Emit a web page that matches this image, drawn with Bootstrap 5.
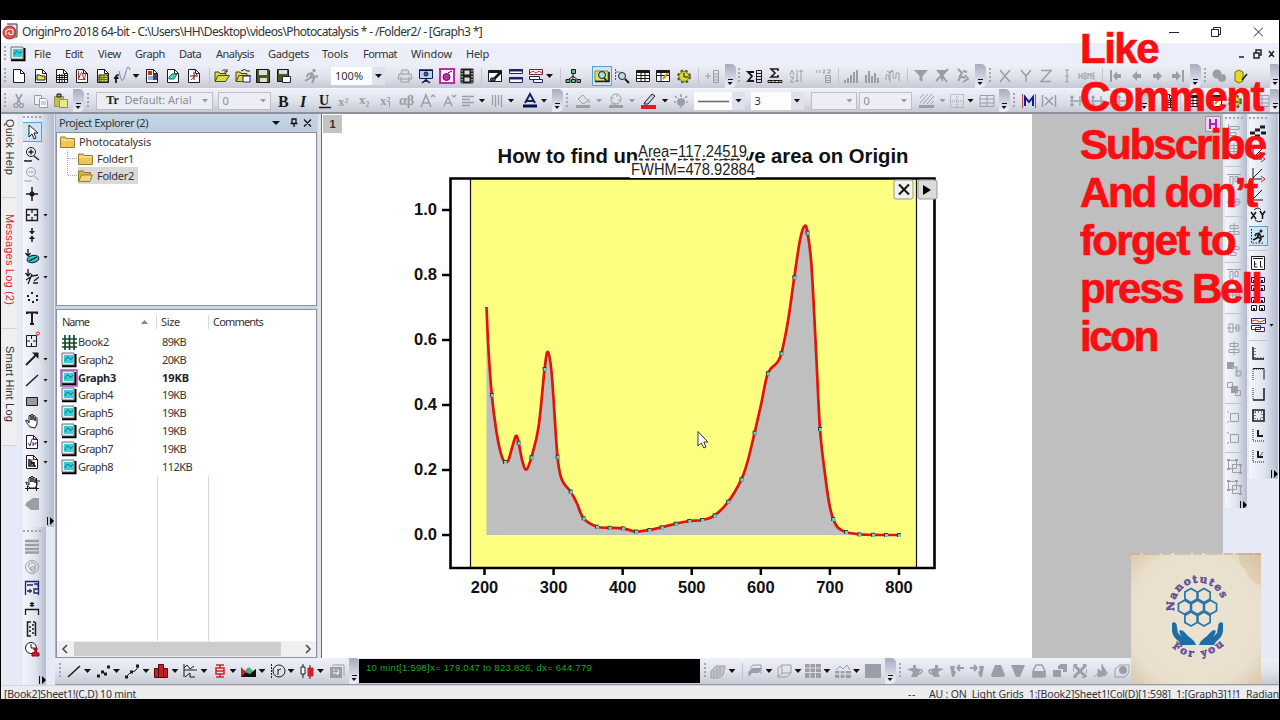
<!DOCTYPE html>
<html lang="en">
<head>
<meta charset="utf-8">
<title>OriginPro 2018 64-bit</title>
<meta name="viewport" content="width=device-width, initial-scale=1">
<link href="https://cdn.jsdelivr.net/npm/bootstrap@5.3.0/dist/css/bootstrap.min.css" rel="stylesheet">
<style>
body{background:#000;font-family:"Noto Sans","Open Sans",sans-serif;font-size:11px;line-height:14px;color:#333;overflow:hidden}
.screen{width:1280px;height:720px;padding:20px 1px 21px;overflow:hidden}
.win{height:679px;background:#e6eaf6;overflow:hidden}
.titlebar{height:23px;background:#fff;padding-left:1px}
.titlebar .ttl{font-size:12px;color:#333;white-space:nowrap}
.menubar{height:21px;background:#eceffa;white-space:nowrap}
.menubar span{color:#333;font-size:11px}
.fitw{display:inline-block;white-space:pre}
.tbar{background:linear-gradient(#edf0f8,#e0e3ec 50%,#c7cad5);overflow:hidden}
.tbar.vert{background:linear-gradient(90deg,#f4f6fc,#dfe3ee 55%,#b4bbcc)}
.tbar1,.tbar2{height:24px}
.tbar2{border-top:1px solid #f4f6fb}
.rule2{height:2px;background:#8e919c}
.ic{width:18px;height:18px;flex:none;position:relative;color:#1b1b1b}
.ic>svg{width:16px;height:16px;display:block;margin:1px;overflow:visible}
.ic.dim{color:#9b9ea5}
.ic.hot{background:#cfe4f5;box-shadow:0 0 0 1px #5aa0cf}
.dd{width:7px;height:4px;flex:none;background:#111;clip-path:polygon(0 0,100% 0,50% 100%)}
.dd.dim{background:#9a9ca4}
.grip{width:4px;height:16px;flex:none;background:repeating-linear-gradient(#a3a6b1 0 2px,transparent 2px 4px) center/2px 100% no-repeat}
.sepv{width:1px;height:16px;flex:none;background:#c2c5d0}
.over{width:11px;flex:none;align-self:stretch;background:linear-gradient(#a9acbf,#e8ebf5 90%);border-radius:0 5px 5px 0;padding-bottom:3px}
.over i{width:5px;height:1px;background:#111;margin-bottom:2px}
.vert .grip{width:20px;height:4px;background:repeating-linear-gradient(90deg,#a3a6b1 0 2px,transparent 2px 4px) center/100% 2px no-repeat}
.vert .sepv{width:18px;height:1px}
.vert .rowc{flex:none;height:18px}
.cmb{flex:none;height:18px;background:#fdfdfe;font-size:11px;padding-left:4px;color:#333}
.cmb.off{background:#eceef4;border:1px solid #bcbfc8;color:#8a8d94}
.cmb .btnx{width:13px;align-self:stretch;background:#dfe2ec}
.cmb.off .btnx{background:none}
.tabs{width:17px}
.tab-v{writing-mode:vertical-rl;background:#efeff1;width:16px;font:11px/15px "Liberation Sans",Arial,sans-serif;color:#333;border-bottom:1px solid #dcd0d8}
.lefttools{width:37px;padding-left:5px}
.px-panel{width:263px;background:#c9d6e4;border-left:1px solid #a9b1bf;padding:0 1px 0 0}
.px-head{height:18px;background:linear-gradient(#c5d7e6,#bccddd);padding-left:3px}
.pane{background:#fff;border:1px solid #8c919b}
.treebox{height:174px;padding:0 3px}
.treebox .rowt{height:17px}
.filebox{height:349px;margin-top:3px}
.rowf{height:17.85px}
.vline{border-left:1px solid #cfdbe6}
.sbar{height:16px;background:#f0f0f0}
.sbar .thumb{width:207px;height:14px;background:#cdcdcd}
.divider{width:4px;background:#e3e4ea;border-right:1px solid #6b6e78}
.sheetno{width:19px;height:18px;background:#c3c3c3;font:bold 11px/18px "Liberation Sans",Arial,sans-serif;color:#333}
.work{width:901px;background:#bfbfbf}
.bottombar{height:27px;border-bottom:1px solid #9598a3}
.readout{width:341px;height:24px;background:#000;color:#1ea42a;font:9.5px/17px "Liberation Sans",Arial,sans-serif;padding-left:7px}
.stat{height:14px;background:#ececee;border-top:1px solid #d5d6dc;overflow:hidden;white-space:nowrap;font-size:10.5px;line-height:17px}
.shout{left:1080px;top:25px;font:bold 42px/48px "Liberation Sans",Arial,sans-serif;color:#fb0d11;-webkit-text-stroke:.7px #fb0d11;z-index:5}
.shout div{white-space:nowrap}
.logo{left:1131px;top:553px;width:130px;height:131px;z-index:6}
.chart{width:710px;height:544px;background:#fff}
</style>
</head>
<body>
<div class="screen position-relative">
<div class="win d-flex flex-column">
  <div class="titlebar d-flex align-items-center">
    <svg width="16" height="17" viewBox="0 0 16 17" class="me-1"><path d="M5 1h10v13h-4" fill="#dce4ee" stroke="#334"/><circle cx="7.5" cy="9.5" r="6.5" fill="#d95350" stroke="#a33033"/><path d="M4 12V7.500l3.500-1.500L11 7v4.500H7V9" fill="none" stroke="#fff" stroke-width="1"/></svg>
    <span class="ttl fitw" data-fit="460">OriginPro 2018 64-bit - C:\Users\HH\Desktop\videos\Photocatalysis * - /Folder2/ - [Graph3 *]</span>
    <svg class="ms-auto me-3" width="94" height="14" viewBox="0 0 94 14" fill="none" stroke="#222"><path d="M0 7.500h10M42.500 4.500h7v7h-7zM44.500 4.500v-2h7v7h-2M85 2.500l9 9M94 2.500l-9 9"/></svg>
  </div>
  <div class="menubar d-flex align-items-center" id="menu"></div>
  <div class="tbar tbar1 d-flex align-items-center" id="t1"></div>
  <div class="tbar tbar2 d-flex align-items-center" id="t2"></div>
  <div class="rule2"></div>

  <div class="d-flex flex-grow-1" style="min-height:0">
    <div class="tabs d-flex flex-column">
      <div class="tab-v" style="height:84px;padding-top:5px"><span class="fitw" data-fitv="56">Quick Help</span></div>
      <div class="tab-v" style="height:131px;padding-top:16px;color:#d9282c"><span class="fitw" data-fitv="91">Messages Log (2)</span></div>
      <div class="tab-v" style="height:117px;padding-top:17px"><span class="fitw" data-fitv="76">Smart Hint Log</span></div>
    </div>
    <div class="lefttools d-flex flex-column">
      <div class="tbar vert d-flex flex-column" id="l1" style="width:31px;height:413px"></div>
      <div class="tbar vert d-flex flex-column" id="l2" style="width:23px;height:158px"></div>
    </div>
    <div class="d-flex flex-column flex-grow-1">
      <div class="d-flex" style="height:544px">
        <div class="px-panel">
          <div class="px-head d-flex align-items-center">
            <span class="fitw" data-fit="89">Project Explorer (2)</span>
            <svg class="ms-auto me-1" width="42" height="12" viewBox="0 0 42 12" fill="none" stroke="#111" stroke-width="1.300"><path d="M1 4h8l-4 4z" fill="#111" stroke="none"/><path d="M19.500 6.500h7M21 6V2h4v4M23 6v4M33 2.500l7 7M40 2.500l-7 7"/></svg>
          </div>
          <div class="pane treebox">
            <div class="rowt d-flex align-items-center"><svg class="me-1 flex-shrink-0" width="15" height="12" viewBox="0 0 15 12"><path d="M.5 2.500V1h5l1 1.500h8v9H.5z" fill="#edc65a" stroke="#9a7a2c"/><path d="M1.500 4h12" stroke="#fff0b0"/></svg><span class="fitw" data-fit="72">Photocatalysis</span></div>
            <div class="d-flex"><svg width="18" height="34" viewBox="0 0 18 34" class="flex-shrink-0" fill="none" stroke="#a4a8b0" stroke-dasharray="1 1"><path d="M7.500 0v25M8 8.500h10M8 25.500h10"/></svg>
              <div>
                <div class="rowt d-flex align-items-center"><svg class="me-1" width="15" height="12" viewBox="0 0 15 12"><path d="M.5 2.500V1h5l1 1.500h8v9H.5z" fill="#edc65a" stroke="#9a7a2c"/><path d="M1.500 4h12" stroke="#fff0b0"/></svg><span class="fitw" data-fit="37">Folder1</span></div>
                <div class="rowt d-flex align-items-center pe-1" style="background:#d9d9d9"><svg class="me-1" width="15" height="12" viewBox="0 0 15 12"><path d="M.5 11.500V1h5l1 1.500h6V5" fill="#d9ae45" stroke="#9a7a2c"/><path d="M.5 11.500L3.500 5h11L12 11.500z" fill="#f4d67a" stroke="#9a7a2c"/></svg><span class="fitw" data-fit="37">Folder2</span></div>
              </div>
            </div>
          </div>
          <div class="pane filebox d-flex flex-column">
            <div class="d-flex align-items-center" style="height:23px">
              <span style="width:84px;padding-left:5px"><span class="fitw" data-fit="27">Name</span></span>
              <span class="dd" style="background:#888;transform:rotate(180deg);margin-right:8px"></span>
              <span class="vline ps-1" style="width:52px"><span class="fitw" data-fit="19">Size</span></span>
              <span class="vline ps-1"><span class="fitw" data-fit="50">Comments</span></span>
            </div>
            <div id="files"></div>
            <div class="d-flex flex-grow-1"><div style="width:100px"></div><div class="vline" style="width:51px"></div><div class="vline"></div></div>
            <div class="sbar d-flex align-items-center justify-content-between px-1"><svg width="8" height="10" fill="none" stroke="#444" stroke-width="1.500"><path d="M6 1L2 5l4 4"/></svg><div class="thumb" style="margin-right:18px"></div><svg width="8" height="10" fill="none" stroke="#444" stroke-width="1.500"><path d="M2 1l4 4-4 4"/></svg></div>
          </div>
        </div>
        <div class="divider"></div>
        <div class="work d-flex position-relative">
          <svg class="chart" viewBox="322 114 710 544" id="chart"></svg>
          <div class="sheetno position-absolute text-center" style="left:1px;top:1px">1</div>
          <svg class="position-absolute" style="left:883px;top:2px" width="16" height="16"><path d="M.5.5h15v15H.5z" fill="#e9d6ee" stroke="#999"/><path d="M5 3v10M11 3v10M5 8h6" stroke="#b51cc0" stroke-width="2"/></svg>
        </div>
        <div class="tbar vert d-flex flex-column" id="r1" style="width:22px;height:394px;margin-left:2px"></div>
        <div class="tbar vert d-flex flex-column" id="r2" style="width:29px;height:365px;margin-left:2px"></div>
      </div>
      <div class="tbar bottombar d-flex align-items-center" id="b1"></div>
    </div>
  </div>
  <div class="stat d-flex" id="status"></div>
</div>

<div class="shout position-absolute">
  <div><span class="fitw" data-fit="78">Like</span></div><div><span class="fitw" data-fit="183">Comment</span></div><div><span class="fitw" data-fit="185">Subscribe</span></div><div><span class="fitw" data-fit="176">And don’t</span></div><div><span class="fitw" data-fit="155">forget to</span></div><div><span class="fitw" data-fit="181">press Bell</span></div><div><span class="fitw" data-fit="77">icon</span></div>
</div>

<svg class="logo position-absolute" viewBox="0 0 130 131" preserveAspectRatio="none" id="logo">
  <defs>
    <radialGradient id="paper" r=".75"><stop offset="0" stop-color="#ece4d3"/><stop offset=".7" stop-color="#e8dfcc"/><stop offset="1" stop-color="#d9c0a0"/></radialGradient>
    <path id="arcTop" d="M43.500 58A24.500 24.500 0 1 1 90.500 63"/><path id="arcBot" d="M38.500 92Q66 118 98 88"/>
  </defs>
  <rect width="130" height="131" fill="url(#paper)"/>
  <path d="M108 0h22v32q-12-2-15-15q-8-4-7-17z" fill="#d8bd9c" opacity=".45"/><path d="M0 1h130" stroke="#ab9576" stroke-width="1.500" stroke-dasharray="9 3 17 2" opacity=".5"/>
  <text font-family="DejaVu Serif,serif" font-weight="bold" font-size="10.500" fill="#6d5bb0" stroke="#3d2f7d" stroke-width=".4"><textPath href="#arcTop" textLength="72" lengthAdjust="spacing">Nanotutes</textPath></text>
  <text font-family="DejaVu Serif,serif" font-weight="bold" font-size="10.500" fill="#6d5bb0" stroke="#3d2f7d" stroke-width=".4"><textPath href="#arcBot" startOffset="3" textLength="58" lengthAdjust="spacing">For you</textPath></text>
  <g id="hex" fill="none" stroke="#2a74a8" stroke-width="1.700"></g>
  <g fill="#1b6ea6"><path id="hand" d="M41 70q3-2 4.500 1l1.500 9 4 4q-5-7-1-7 2 0 7 6 7 5 7.500 8l.5 1H50q-1-3-5-6-4-4-4-9z"/><path d="M41 70q3-2 4.500 1l1.500 9 4 4q-5-7-1-7 2 0 7 6 7 5 7.500 8l.5 1H50q-1-3-5-6-4-4-4-9z" transform="translate(133) scale(-1 1)"/></g>
</svg>
</div>

<script>
/* Icons are 16x16 drawings; unset strokes use the button's colour. */
const F='fill="currentColor" stroke="none"';
const page='<path d="M2.500 1.500h7l4 4v9h-11z" fill="#fff"/><path d="M9.500 1.500v4h4"/>';
const fold='<path d="M1 13.500l3-6h11.500l-4 6zM1 13V4h4l1 1.500h6v2" fill="#d8d850" stroke="#4a4a10"/>';
const win='<path d="M1.500 2.500h13v11h-13z" fill="#fff"/><path d="M1.500 4h13" stroke-width="2"/>';
const graph='<path d="M1 1h12v12H1z" fill="#e8eef0" stroke="#68737a"/><path d="M3 3h9v8H3z" fill="#35cfd6" stroke="none"/><path d="M4 9q2-6 4-3t4-1" stroke="#166c88"/><path d="M1 14.200h13.500V2" stroke="#000" stroke-width="2"/>';
const I={
doc:page,
docf:page+'<path d="M4 12V7h3l1 1h4v4z" fill="#e6e455"/>',
docg:page+'<path d="M3 7.500h10M3 9.500h10M3 11.500h10M5.500 6v8M8 6v8M10.500 6v8"/>',
docr:page+'<path d="M4.500 3v8.500h7" stroke="#944"/><path d="M5 10q3-10 4-2t3-4" stroke="#c22"/>',
docy:page+'<path d="M4 7h9v7H4z" fill="#dede55"/><path d="M3 9.500h10M3 11.500h10M6 6v8M9 6v8" stroke="#663"/>',
fx:'<path d="M2 15V9q0-2 2.500-2M0 10h4.500" stroke-width="1.800"/><path d="M5 3q3 17 6 4t5-5" stroke="#6a95a0"/>',
docc:page+'<path d="M4 3h4v4H4z" fill="#d22" stroke="none"/><path d="M4 9h8M4 11h8" stroke="#36a"/><path d="M9 6h4v6H9z" fill="#446" stroke="none"/>',
doct:page+'<path d="M4 9l3-3h5l-3 5H4z" fill="#5bc6c4" stroke="#176"/>',
docx:page+'<path d="M8 4v8M4 8h8" stroke="#222"/><path d="M5 12L12 5" stroke="#c22"/>',
open:fold+'<path d="M8 3q3-3 5 1M13 1v3h-3" stroke="#333"/>',
openg:fold+'<path d="M8 8h7v6H8z" fill="#fff" stroke="#226"/><path d="M6 3q4-3 6 0h3"/>',
save:'<path d="M1.500 1.500h12l1 1v12h-13z" fill="#4c5820" stroke="#111"/><path d="M4 2h8v5H4zM5 10h7v4H5z" fill="#ddd" stroke="none"/>',
saveg:'<path d="M1.500 1.500h11v12h-11z" fill="#4c5820"/><path d="M3 2h8v4H3z" fill="#ddd" stroke="none"/><path d="M6.500 8.500h8v6h-8z" fill="#fff" stroke="#225"/>',
run:'<circle cx="10" cy="2.500" r="1.700" '+F+'/><path d="M8.500 5L4 6 3 9M8 5l2 4 4-1M8 6L6 10l-5 3M7 9l3 2-2 4" stroke-width="2"/>',
print:'<path d="M4 6l1-4h6l1 4M2 6h12l1 5H1zM4 9v5h8V9" fill="#ddd"/>',
slide:'<path d="M1.500 2.500h13v8h-13z" fill="#b9d2f5" stroke="#124"/><path d="M1 2h14M8 10v4M4 15l4-3 4 3" stroke="#115" stroke-width="1.500"/><circle cx="8" cy="6" r="2" fill="#36a"/>',
pink:'<path d="M1 1h14v14H1z" fill="#fff" stroke="#c02ab0" stroke-width="2"/><circle cx="7.500" cy="9" r="3.500" fill="#c02ab0" stroke="#802"/><path d="M9 5l4-2"/>',
film:'<path d="M2 1h12v14H2z" fill="#222"/><path d="M5 2h6v5H5zM5 9h6v5H5z" fill="#ddd"/><path d="M3 2v13M13 2v13" stroke="#fff" stroke-dasharray="1.500 1.500"/>',
edit:win+'<path d="M14 4L8 10l-3 3" stroke="#111" stroke-width="2.500"/><path d="M4 10h4v3H3z" fill="#268"/>',
bars:'<path d="M1.500 1.500h13v4h-13zM1.500 9.500h13v5h-13z" fill="#fff" stroke="#226"/><path d="M1 2.500h14M1 10.500h14" stroke="#226" stroke-width="2"/>',
barsr:'<path d="M1.500 1.500h13v5h-13z" fill="#fff" stroke="#723"/><path d="M2 5l3-2 3 2 3-2 3 2" stroke="#b23"/><path d="M1.500 8.500h10v3h-10zM5.500 11.500h9v3h-9z" fill="#fff" stroke="#226"/>',
tree:'<path d="M8 5v3M8 8l-5 4M8 8v4M8 8l5 4"/><path d="M6.500 1.500h4v4h-4zM1 11.500h4v3H1zM6.500 11.500h4v3h-4zM12 11.500h3.500v3H12z" fill="#6db38c"/>',
zgraph:'<path d="M1 3h13v10H1z" fill="#e4de5d" stroke="#8a8730"/><circle cx="8" cy="7" r="3.500" fill="#9be0e8"/><path d="M10 10l4 4M1 13.500h14V4" stroke-width="1.600"/>',
zr:'<path d="M1.500 1v11M2 4h4" stroke="#c24" stroke-dasharray="2 1"/><circle cx="8" cy="8" r="3.500" fill="#bde"/><path d="M11 11l4 4" stroke-width="2"/>',
tbl:win+'<path d="M2 7.500h12M2 10.500h12M6 4v9M10 4v9"/>',
tblp:win+'<path d="M2 7.500h12M6 4v9"/><path d="M13 5l-5 6" stroke="#c90" stroke-width="2"/>',
gear:'<circle cx="8" cy="8.500" r="5.500" stroke="#55551c" stroke-width="3" stroke-dasharray="2.400 2"/><circle cx="8" cy="8.500" r="5" fill="#d8d53c" stroke="#77751e"/><path d="M8 5v4h4"/>',
addc:'<path d="M1 8h6M4 5v6M9.500 2.500h5v12h-5zM9 6h6M9 9h6M9 12h6"/>',
sigc:'<path d="M7 4H1l4 4-4 5h6" stroke-width="1.800"/><path d="M9.500 2.500h5v12h-5zM9 5.500h6M9 8.500h6M9 11.500h6"/>',
sigr:'<path d="M11 3V1H4l4 4-4 4h7V7" stroke-width="1.600"/><path d="M1 12.500h14v2H1zM4 12v3M8 12v3M12 12v3"/>',
sort:'<path d="M2 7l2-5 2 5M2 9h4l-4 5h4M9 14V2M7.500 12L9 14l1.500-2M13 14V2M11.500 4L13 2l1.500 2"/>',
num:'<path d="M1 2v3M4 2v3M7 2h2l-2 3h2M11 2h3v3h-3M9.500 7.500h5v7h-5zM9 10h5M9 12.500h5"/>',
hist:'<path d="M2 15v-3M5 15v-5M8 15V7M11 15V4M14 15V2" stroke-width="2"/>',
hist2:'<path d="M2 15V7M5 15V3M8 15V8M11 15V5M14 15v-5" stroke-width="2"/>',
sig:'<path d="M1 12V7h3v5M5 14V3h3v7h3V5h3v8M2 3l3 2 3-3"/>',
filt:'<path d="M1 2h14L9.500 8v6l-3-2V8z" '+F+'/>',
filtx:'<path d="M2 2h12L9 8v6l-2-2V8zM3 14L14 3" '+F+'/><path d="M2 13L14 1M4 2l9 12" stroke-width="2"/>',
arr:'<path d="M3 1l4 4-2 3 5 2M3 13l3-5M8 14l5-3-3-4M12 4L8 3" stroke-width="2"/>',
X:'<path d="M3 2l10 12M13 2L3 14" stroke-width="1.500"/>',
Y:'<path d="M3 2l5 6 5-6M8 8v6" stroke-width="1.500"/>',
Z:'<path d="M3 2.500h10L3 13.500h10" stroke-width="1.500"/>',
E:'<path d="M6 2h4M8 2v12M6 14h4M6 8h4"/>',
home:'<path d="M0 5v6M3 5v6M0 8h3M5 5h2v6H5zM9 11V5l1.500 3L12 5v6M16 5h-2v6h2M14 8h2"/>',
first:'<path d="M3 2v12" stroke-width="2"/><path d="M13 6H9V3L5 8l4 5v-3h4z" '+F+'/>',
prev:'<path d="M12 6H8V3L3 8l5 5v-3h4z" '+F+'/>',
next:'<path d="M4 6h4V3l5 5-5 5v-3H4z" '+F+'/>',
last:'<path d="M13 2v12" stroke-width="2"/><path d="M2 6h4V3l5 5-5 5v-3H2z" '+F+'/>',
blob:'<circle cx="6" cy="6" r="4.500" '+F+'/><circle cx="11" cy="10" r="4" '+F+'/>',
cube:'<path d="M3 4v9l4 2 4-2V4L7 2z" fill="#e3dc22" stroke="#77720a"/><path d="M10 12l5-6" stroke-width="1.500"/>',
cut:'<path d="M5 1l4 9M11 1L6 10" stroke-width="1.700"/><circle cx="5" cy="12.500" r="2" stroke-width="1.400"/><circle cx="10.500" cy="12.500" r="2" stroke-width="1.400"/>',
copy:'<path d="M1.500 2.500h7v9h-7z" fill="#eef"/><path d="M6.500 5.500h6l2 2v7h-8z" fill="#f8fafa"/><path d="M8 9h5M8 11h5" stroke="#7ab7a3"/>',
paste:'<path d="M1.500 3.500h9v10h-9z" fill="#c5bd57" stroke="#99914a"/><path d="M4 1h4v3H4z" fill="#999"/><path d="M6.500 6.500h8v8h-8z" fill="#e9e98a" stroke="#7b9a62"/>',
bold:'<text x="2" y="14" font-family="Liberation Serif,serif" font-weight="bold" font-size="16" '+F+'>B</text>',
ital:'<text x="4" y="14" font-family="Liberation Serif,serif" font-weight="bold" font-style="italic" font-size="16" '+F+'>I</text>',
und:'<text x="2" y="12" font-family="Liberation Serif,serif" font-weight="bold" font-size="14" '+F+'>U</text><path d="M2 14.500h12" stroke-width="1.500"/>',
sup:'<text x="1" y="13" font-family="Liberation Serif,serif" font-weight="bold" font-size="13" '+F+'>x²</text>',
sub:'<text x="1" y="11" font-family="Liberation Serif,serif" font-weight="bold" font-size="13" '+F+'>x₂</text>',
both:'<text x="1" y="12" font-family="Liberation Serif,serif" font-weight="bold" font-size="13" '+F+'>x²</text><path d="M10.500 9v5"/>',
ab:'<text x="0" y="12" font-family="Liberation Serif,serif" font-weight="bold" font-size="14" '+F+'>αβ</text>',
Aup:'<path d="M1 14L6 2l5 12M3 10h6M11 4l2-2 2 2" stroke-width="1.500"/>',
Adn:'<path d="M3 13l4-9 4 9M5 10h5M11 2l2 2 2-2" stroke-width="1.400"/>',
al:'<path d="M2 3.500h12M2 6.500h8M2 9.500h12M2 12.500h8" stroke-width="1.300"/>',
vl:'<path d="M3.500 2v10M6.500 2v12M9.500 2v10M12.500 2v12" stroke-width="1.300"/>',
acol:'<path d="M3 10L8 1l5 9M5 8h6" stroke="#125" stroke-width="2"/><path d="M1 11.500h14v3H1z" fill="#060d50" stroke="none"/>',
bucket:'<path d="M3 6l5-4 5 6-5 3zM13 6q3 3 1 4"/><path d="M1 12h14v3H1z" '+F+'/>',
pal:'<circle cx="8" cy="6" r="5"/><path d="M4 5h2M8 3h2M10 7h2M3 11h5"/><path d="M1 12h14v3H1z" '+F+'/>',
pen:'<path d="M4 9l7-8 3 2-7 8H3z" fill="#cce"/><path d="M0 12h15v4H0z" fill="#e21b23" stroke="none"/>',
bulb:'<circle cx="8" cy="9" r="4" '+F+'/><path d="M8 1v3M2 3l2 2M14 3l-2 2M1 9h2M13 9h2M8 13v2" stroke-width="1.500"/>',
hatch:'<path d="M1 10L9 1M4 11L13 1M8 11l7-8M1 5l4-4M12 11l3-3"/><path d="M0 12h15v3H0z" '+F+'/>',
dots:'<path d="M1.500 1.500h13v13h-13zM8 1v14M1 8h14" stroke-dasharray="1 1"/>',
grid:'<path d="M1 2.500h14v11H1zM1 6h14M1 10h14M8 2v11"/>',
Mm:'<path d="M1.500 1v14M14.500 1v14" stroke="#c44"/><path d="M4 13V4l4 5 4-5v9" stroke="#10189b" stroke-width="2"/>',
Xm:'<path d="M1.500 2v12M14.500 2v12M4 4l8 8M12 4l-8 8" stroke-width="1.500"/>',
ud:'<path d="M4 3v4M2.500 5L4 3l1.500 2M2 8h12M12 3v4M4 9v4M12 9v4M2.500 11L4 13l1.500-2" stroke-width="1.300"/>',
ptr:'<path d="M5 1v12l3-3 2 5 2-1-2-5h4z" fill="#fff"/>',
zin:'<circle cx="7" cy="6" r="4.500" fill="#eef"/><path d="M4.500 6h5M7 3.500v5M10 10l5 4M1 14v1h6v-1" stroke-width="1.400"/>',
zout:'<circle cx="7" cy="6" r="4.500"/><path d="M4.500 6h5M10 10l5 4M1 14v1h6v-1"/>',
cross:'<path d="M8 1v14M2 8h12" stroke-width="1.500"/><circle cx="8" cy="8" r="2.500" '+F+'/>',
boxx:'<path d="M2.500 2.500h11v11h-11zM8 2v4M8 10v4M2 8h4M10 8h4" stroke-width="1.300"/>',
vv:'<path d="M8 1v4M8 11v4" stroke-width="1.500"/><path d="M5 4h6L8 7.500zM5 12h6L8 8.500z" '+F+'/>',
ell:'<ellipse cx="9" cy="10" rx="6" ry="3.500" fill="#31c3d1" transform="rotate(-12 9 10)"/><path d="M4 0v7M1.500 4L4 7l2.500-3M5 12l8-4" stroke-width="1.300"/>',
msk:'<path d="M4 0v7M1.500 4L4 7l2.500-3M4 15l4-10M2 11l6-4 6-1M10 12l5-4M9 14h5" stroke-width="1.300"/>',
pts:'<path d="M3 6h2M7 3h2M12 6h2M4 10h2M8 12h2M12 10h2" stroke-width="2"/>',
T:'<path d="M3 4V2.500h10V4M8 3v11M6 14h4" stroke-width="2"/>',
boxa:'<path d="M2.500 3.500h10v11h-10zM7.500 3v4M7.500 11v4M2 9h4M9 9h4"/><circle cx="14" cy="1.500" r="1.500" stroke="#d22"/>',
ar:'<path d="M2 14L13 3" stroke-width="1.800"/><path d="M8 1.500h6.500V8z" '+F+'/>',
ln:'<path d="M2 14L14 3" stroke-width="1.500"/>',
rect:'<path d="M2.500 4.500h11v8h-11z" fill="#9a9a9a"/>',
hand:'<path d="M6 14q-5-6-4-7 2 0 3 3V3q1-2 2 0v4-5q1-2 2 0v5-4q2-1 2 0v5-3q2-1 2 0v6l-2 4z" fill="#fff"/>',
handx:'<path d="M6 13q-5-5-4-6 2 0 3 3V3q1-2 2 0v4-5q1-2 2 0v5-4q2-1 2 0v5-3q2-1 2 0v5l-2 3z" fill="#fff"/><path d="M1 13.500h14M12.500 3v13M3.500 11v5M14 6h2" />',
eq:page+'<path d="M4 9l2 3 2-7h4M9 8v4M9 10h3v-2" stroke="#528"/>',
eqg:page+'<path d="M5 5v7h7M7 11V7l3 4V8" stroke-width="1.600"/><path d="M6 7l5-2" stroke="#c33"/>',
cloud:'<path d="M3 6l6-4h6v12H7L1 9z" '+F+'/>',
stripes:'<path d="M1 3h14M1 7h14M1 11h14M1 14.500h14" stroke-width="2.500"/>',
circs:'<circle cx="8" cy="8" r="6.500"/><circle cx="8" cy="7" r="3.500"/><circle cx="9" cy="10" r="2.500"/>',
scal:'<path d="M1.500 15V1.500h13V15M3 5h6M3 11h5M6 9v4M10 4h4v3M14 9h-4v4h4" stroke="#22236b" stroke-width="1.300"/>',
brk:'<path d="M1.500 15V9.500h13V15M8 2v5M6 3l4 3M10 3L6 6" stroke-width="1.300"/>',
cols:'<path d="M7 1H3.500v14H7M11.500 1v14M8 4h2M8 8h2M8 12h2M5 6h2M5 10h2M9 1h2" stroke-width="1.500"/>',
clock:'<circle cx="7" cy="7" r="5.500" fill="#fff"/><path d="M7 3v4h3"/><path d="M8 15h7v-3h-2l-1-3-2 3H8zM10 7h3v2h-3z" fill="#c6202a" stroke="#901"/>',
sct:'<path d="M1 13h3M5 9h3M8 11h3M11 4h3" stroke-width="3"/>',
lns:'<path d="M1 14L6 9l4-1 4-5"/><path d="M0 14h3M5 9h3M11 3h3" stroke-width="3"/>',
colr:'<path d="M1.500 14.500v-9h4v-4h5v4h4v9z" fill="#c51f24" stroke="#600"/><path d="M5.500 6v8M10.500 6v8"/>',
mul:'<path d="M2 1v13M2 7h13M2 5l3-3 3 4 4-3M3 14l5-4v4h5"/>',
box:'<path d="M4 2h8M8 2v3M8 11v3M4 14h8M4 5h8v6H4zM4 8h8" stroke="#c9252d" stroke-width="1.500"/>',
area:'<path d="M0 4l4 4 3-3 4 4 4-3v8H0z" fill="#c5222a" stroke="none"/><path d="M0 14l5-5 4 2 6-5v8z" fill="#111" stroke="none"/><path d="M4 9l4-5 4 4-3 3z" fill="#3b7" stroke="none"/>',
polar:'<path d="M1.500 1v14" stroke-dasharray="2 1"/><circle cx="9" cy="8" r="6"/><path d="M8 12V6M8 8q1-2 3-2"/>',
candle:'<path d="M4 1v14M11 2v14"/><path d="M2 4h4v7H2z" fill="#fff"/><path d="M9 5h5v8H9z" fill="#d41c25" stroke="#d41c25"/>',
blk:'<path d="M1 4h12v11H1z" '+F+'/><path d="M3 2h12v11" /><path d="M4 7h2M8 7h2M4 10h6M8 12l2-4" stroke="#fff"/>',
d3:'<path d="M1 8l5-5h9l-2 9-4 3H1z" fill="#c4c6cc"/><path d="M4 14V7M7 14V5M10 12V4"/>',
d3b:'<path d="M1 9l4-4h10l-3 5H5l-3 4z" '+F+'/><path d="M3 5l3-3h8v9"/>',
d3c:'<path d="M2 5l4-3h9v8l-4 4H2zM6 2v8h9M6 10l-4 4" />',
blkg:'<path d="M0 1h16v14H0z" '+F+'/><path d="M0 5h16M0 9.500h16M5 1v14M10.500 1v14" stroke="#ddd"/>',
wav:'<path d="M1 7l4-4 3 3 4-4 3 5"/><path d="M0 8h16v7H0z" '+F+'/><path d="M0 11h16M5 8v7M10 8v7" stroke="#eee"/>',
sq:'<path d="M0 1h16v14H0z" '+F+'/>',
cup:'<path d="M0 6l6-1V2h3v3l4 1v2l-3 6H4l2-5z" '+F+'/><path d="M12 7q5-1 2 3l-4 2" stroke-width="1.500"/>',
cup2:'<path d="M16 6l-6-1V2H7v3L3 6v2l3 6h6l-2-5z" '+F+'/><path d="M4 7q-5-1-2 3l4 2" stroke-width="1.500"/>',
cl:'<path d="M3 14L1 3h5l-1 4 2 2-2 5z" '+F+'/><path d="M8 5h7M8 5l3-3M8 5l3 3" stroke-width="2"/>',
cr:'<path d="M13 14l2-11h-5l1 4-2 2 2 5z" '+F+'/><path d="M8 5H1M8 5L5 2M8 5L5 8" stroke-width="2"/>',
trU:'<path d="M5 2h6l4 10-1 2H2l-1-2z" '+F+'/>',
trD:'<path d="M1 2h14l-5 12H6z" '+F+'/>',
lock:'<path d="M2 8l3-6h6l3 6v6H2z" stroke-width="1.500"/><path d="M2 8h12v6H2z" '+F+'/>',
st:'<path d="M1 7h8v7H1zM6 3l3-2h6v8h-4V6H6z" '+F+'/>',
exp:'<path d="M2 2l12 12M14 2L2 14" stroke-width="3"/><path d="M1.500 1.500h13v13h-13z" stroke-dasharray="4 5"/>',
rot:'<path d="M1 14l5-4M9 1v8l6 2M5 6l8 6-8 2z" fill="currentColor"/>',
ob:'<path d="M1 6l5-4h9v7l-4 5H1z"/><ellipse cx="9" cy="7" rx="4" ry="4" '+F+'/>',
al1:'<path d="M2.500 2v12M4 4.500h9v3H4zM4 10.500h6v3H4z"/>',
al2:'<path d="M8 1v14M4 3.500h8v3H4zM3 9.500h10v3H3z"/>',
al3:'<path d="M1 2.500h14M4 4.500h3v8H4zM9 4.500h3v5H9z"/>',
al4:'<path d="M1 8h14M3 4h4v8H3zM10 5h3v6h-3z"/>',
fr:'<path d="M1 1h7v7H1z" '+F+'/><path d="M6 6h5v5M10 10h5v5h-5z" fill="#ccd"/>',
bk:'<path d="M1.500 1.500h5v5h-5zM9.500 9.500h5v5h-5z"/><path d="M5 5h7v7H5z" '+F+'/>',
sqs:'<path d="M4.500 4.500h8v8h-8zM1 2l2 2M1 14l2-2"/>',
grp:'<path d="M2.500 2.500h8v8h-8zM6.500 6.500h8v8h-8z"/><path d="M1 2h3M9 2h3M1 11h3M13 7h3M13 15h3" stroke-width="2"/>',
chk:'<path d="M10 4h5M5 7h5M11 10h5M0 10h5M5 13h5" stroke-width="3"/>',
ax:'<path d="M3 2v11h9M3 12l9-9"/><path d="M11 10l4 3-4 3" stroke="#c22"/>',
ax2:'<path d="M3 2v12h10M3 13l9-9"/>',
xy:'<path d="M1 5l5 7M6 5l-5 7M10 4l2.500 4L15 4M12.500 8v4" stroke-width="1.600"/><path d="M4 3q4-4 7 0M5 13q3 3 7 1"/>',
runf:'<path d="M1.500 1v14h13" stroke-dasharray="1.500 1.500"/><circle cx="11" cy="3" r="1.500" '+F+'/><path d="M10 5L6 6 5 8M9 5l2 4 3-1M9 6l-2 4-4 2M8 9l3 2-2 3" stroke-width="1.700"/>',
lay:'<path d="M1.500 1.500h13v13h-13z" fill="#fff"/><path d="M4.500 6v6h3M4.500 9h2M10.500 6v6h2M3 3.500h10" />',
lay4:'<path d="M1.500 1.500h5v5h-5zM9.500 1.500h5v5h-5zM1.500 9.500h5v5h-5zM9.500 9.500h5v5h-5z" fill="#fff"/><path d="M3 5h2M11 5h2M3 13h2M11 13h2" stroke-width="2"/>',
lay2:'<path d="M1.500 1.500h14v5h-14z" fill="#fff" stroke="#426"/><path d="M2 4l4-1 4 2 5-2" stroke="#c24"/><path d="M1.500 8.500h9v4h-9zM5.500 10.500h9v4h-9z" fill="#fff" stroke="#426"/>',
fL:'<path d="M3 2v12h11" stroke-width="1.500"/><path d="M5 3v10h9" stroke-dasharray="1 2"/>',
fT:'<path d="M3 14V3h11" stroke-dasharray="1 1"/><path d="M3 2.500h11v11" stroke-width="1"/>',
fR:'<path d="M3 2v12" stroke-dasharray="1 1"/><path d="M3 14h11V2" stroke-width="1.500"/>',
fB:'<path d="M3 3h11v11H3z" stroke-width="1.600"/><path d="M5 5h7v7H5z" stroke-dasharray="1 2"/>',
fi:'<path d="M3 2v12h11" stroke-dasharray="1 1"/><path d="M8 3v6h5" stroke-width="2"/>',
fj:'<path d="M3 2v12h11" stroke-dasharray="1 1"/><path d="M8 3v6h5" stroke-width="2"/><path d="M10 8l3-4" stroke="#c33"/>',
book:'<path d="M1 1h14v14H1z" fill="#fff" stroke="none"/><path d="M1 5h15M1 9h15M1 13h15M4 1v15M8.500 1v15M13 1v15" stroke="#124a2b" stroke-width="1.700"/>',
graph:graph,
graphp:graph+'<path d="M0 0h16v16H0z" stroke="#a04bc0" stroke-width="1.500"/>'
};
const svg=n=>`<svg viewBox="0 0 16 16" fill="none" stroke="currentColor">${I[n]}</svg>`;
/* name:centre ; trailing ! = disabled, * = pressed, + = has a drop-down */
function fill(id,origin,spec,vertical){
  const el=document.getElementById(id);let pos=origin,h='';
  for(const it of spec){
    let [n,c,w,txt]=Array.isArray(it)?it:it.split(':');c=+c;
    const base=n.replace(/[!*+]/g,''),dim=n.includes('!')?' dim':'',hot=n.includes('*')?' hot':'';
    let size={grip:4,sep:1,dd:vertical?4:7,over:vertical?8:11}[base]||18;
    if(w)size=+w;
    const m=(c-size/2-pos),st=vertical?`margin-top:${m}px`:`margin-left:${m}px`;
    pos=c+size/2;
    if(base==='grip')h+=`<div class="grip" style="${st}"></div>`;
    else if(base==='sep')h+=`<div class="sepv" style="${st}"></div>`;
    else if(base==='dd')h+=`<div class="dd${dim}" style="${st}"></div>`;
    else if(base==='over')h+=vertical?`<div class="text-end" style="${st};height:8px;line-height:0"><svg width="8" height="8"><path d="M1.500 0v8" stroke="#111"/><path d="M4 0l4 4-4 4z"/></svg></div>`
      :`<div class="over d-flex flex-column align-items-center justify-content-end" style="${st}"><i></i><span class="dd" style="width:5px;height:3px"></span></div>`;
    else if(base==='cmb'||base==='cmbline')h+=`<div class="cmb d-flex align-items-center ${dim?'off':''}" style="${st};width:${size}px"><span class="flex-grow-1 fitw">${base==='cmbline'?'<svg width="34" height="3"><path d="M0 1.500h31" stroke="#666" stroke-width="1.500"/></svg>':txt}</span><span class="btnx d-flex align-items-center justify-content-center"><span class="dd${dim}"></span></span></div>`;
    else if(base==='black')h+=`<div class="readout flex-shrink-0" style="${st}"><span class="fitw" data-fit="226">10 mint[1:598]x= 179.047 to 823.826, dx= 644.779</span></div>`;
    else if(vertical)h+=`<div class="rowc d-flex align-items-center" style="${st}"><div class="ic${dim}${hot}">${svg(base)}</div>${n.includes('+')?'<span class="dd" style="width:5px;height:3px;margin-left:2px"></span>':''}</div>`;
    else h+=`<div class="ic${dim}${hot}" style="${st}">${svg(base)}</div>`;
  }
  el.innerHTML=h;
}
const s=t=>t.split(' ');
fill('t1',1,[...s('grip:5 doc:19 docf:41 docg:61.5 docr:82 docy:103 fx:122 dd:136 docc:152 doct:173 docx:194 sep:209 open:222 openg:242.5 save:263 saveg:284 run!:312'),['cmb',358,54,'100%'],...s('print!:405 slide:426 pink:447 film:467 sep:481 edit:495 bars:516 barsr:536 dd:549.5 sep:560 tree:573 zgraph*:601.5 zr:622 tbl:643 tblp:663 gear:684 sep:698 addc!:712 over:730 grip:739 sigc:755 sigr:775 sort!:796 num!:824 sep:838 hist!:851 hist2!:872 sig!:893 sep:907 filt!:921 filtx!:942 arr!:963 over:980 grip:990 X!:1005 Y!:1026 Z!:1046 E!:1067 home!:1087 sep:1102 first!:1116 prev!:1137 next!:1157 last!:1178 over:1195 grip:1205 blob!:1219 cube:1240 over:1275')]);
fill('t2',1,[...s('grip:5 cut!:19 copy!:41 paste:61 over:78 grip:88'),['cmb!',154,117,'<b style="font:bold 12px Liberation Serif;color:#222">  Tr</b>  Default: Arial'],['cmb!',244,53,'0'],...s('bold:284 ital:304 und:325 sup!:345 sub!:366 both!:387 ab!:407 Aup!:428 Adn!:449 al!:468 dd:482 vl!:497 dd:511 acol:529.5 dd:544 over:557 grip:567 bucket!:583 dd!:599 pal!:616 dd!:632 pen:649 dd:665 bulb!:681'),['cmbline',719.5,51],['cmb',777,53,'3'],['cmb!',834,46,''],['cmb!',885,53,'0'],...s('hatch!:927 dd!:942.5 dots!:957 dd:970.5 grid!:987 over:1004 grip:1014 Mm:1028.5 Xm!:1049 ud!:1076 ud!:1097 ud!:1123 over:1144 grip:1154 docg:1168 sep:1180 tbl:1195 tblp:1215 gear:1235 grid!:1262 over:1275')]);
fill('l1',114,s('grip:117 ptr*:132 zin:154 zout!:174 cross:194 boxx+:215 vv:235 ell+:257 msk+:277 pts:298 T:317.5 boxa:340 ar+:359 ln+:380 rect+:401 hand:421 eq+:442 eqg+:462 handx:483 cloud!:503.5 over:521'),true);
fill('l2',527,s('grip:531 stripes!:546 circs!:567 scal:588 brk:608 cols:629 clock:649 over:680'),true);
fill('r1',114,s('grip:118 al1!:130 al2!:150 sep:166 al3!:180 al4!:202 sep:216 al2!:230 al1!:250 sep:262 al3!:275 al4!:295 sep:313 al4!:328 al2!:348 fr!:369 bk!:389 sep:403 sqs!:417 sqs!:438 sep:452 grp!:466 grp!:486.5 over:505'),true);
fill('r2',114,s('grip:118 chk:131 ax:154 ax:174 ax2:194 xy:215 runf*:236 sep:250 lay:263 lay4:284 lay4:304 lay2+:325 sep:340 fL:353 fT:374 fR:394 fB:415 fi:435 fj:456 over:474'),true);
fill('b1',55,[...s('grip:60 ln:74 dd:87.5 sct:104 dd:116.5 lns:133 dd:146 colr:161 dd:175 mul:190 dd:204 box:220 dd:233 area:249 dd:262 polar:277.5 dd:291 candle:307 dd:320.5 blk!:337 over:354'),['black',529.5,341],...s('grip:705 d3!:718 dd:732 sep:742 d3b!:755 dd:769 d3c!:784 dd:798 blkg!:813 dd:827 wav!:843 dd:856.5 sq!:873 over:890 grip:900 cup!:915 cup2!:936 cl!:957 cr!:977 trU!:998 trD!:1018 lock!:1039 st!:1060 exp!:1080 rot!:1101 ob!:1122')]);

/* text rows laid in flow: [text, left, width] */
function texts(id,origin,list){let p=origin;document.getElementById(id).innerHTML+=list.map(([t,x,w])=>{const r=`<span class="fitw flex-shrink-0" data-fit="${w}" style="margin-left:${x-p}px;width:${w}px">${t}</span>`;p=x+w;return r}).join('')}
document.getElementById('menu').innerHTML='<div class="grip" style="margin-left:2px"></div><div class="ic" style="margin-left:2px;width:16px">'+svg('graph')+'</div>';
texts('menu',25,[['File',34,17],['Edit',65,18],['View',98,23],['Graph',135,30],['Data',179,22],['Analysis',216,38],['Gadgets',268,41],['Tools',322,26],['Format',363,34],['Window',411,41],['Help',466,23]]);
document.getElementById('menu').innerHTML+='<svg class="ms-auto me-1" width="36" height="12" viewBox="0 0 36 12" fill="none" stroke="#222" stroke-width="1.500"><path d="M0 9h5M15 5h5v5h-5zM17 5V2h5v5h-2M30 3l5 6M35 3l-5 6"/></svg>';
texts('status',1,[['[Book2]Sheet1!(C,D) 10 mint',4,132],['--',908,8],['AU : ON&nbsp; Light Grids&nbsp; 1:[Book2]Sheet1!Col(D)[1:598]&nbsp; 1:[Graph3]1!1&nbsp; Radian',929,350]]);

document.getElementById('files').innerHTML=[['Book2','89KB',31],['Graph2','20KB',35],['Graph3','19KB',38],['Graph4','19KB',35],['Graph5','19KB',35],['Graph6','19KB',35],['Graph7','19KB',35],['Graph8','112KB',35]].map(([n,z,w])=>
 `<div class="rowf d-flex align-items-center ${n==='Graph3'?'fw-bold text-dark':''}"><span class="ic" style="margin-left:3px">${svg(n==='Book2'?'book':n==='Graph3'?'graphp':'graph')}</span><span style="width:84px"><span class="fitw" data-fit="${w}">${n}</span></span><span class="fitw" data-fit="${z==='112KB'?30:n==='Graph3'?27:24}">${z}</span></div>`).join('');

/* absorbance spectrum with integration region */
const P=[[486.5,307],[488.5,350],[491.8,395],[495.7,426.7],[500,450],[504.3,461.7],[508.2,460.5],[511.4,450],[515.9,436],[518.6,442.7],[522.5,461.7],[526.4,469.5],[531.4,457.3],[538.6,426.7],[544.6,369],[547.9,352],[551.8,375],[557.5,456.7],[562,480],[570.7,491.7],[576.8,503],[583.6,518.3],[597,526.7],[609.6,527.8],[622.9,528.3],[636,531.5],[649.3,530],[661.8,527.3],[675.7,523.7],[689.3,521],[702,520],[714.6,515.3],[728.2,501.7],[741.4,479.3],[748,460],[754.6,432.7],[761.4,403],[767.9,373.3],[776.8,363],[781.4,353.3],[788,321],[794.3,277.3],[800,240],[804.6,226],[807.5,232.7],[811.5,266],[816,350],[820,429],[825,474],[829.3,504],[833.2,519],[838,527.7],[846,532],[859.3,534.3],[873,534.8],[886,535],[899,535]];
let d='M'+P[0];
for(let i=0;i<P.length-1;i++){const a=P[i-1]||P[i],b=P[i],c=P[i+1],e=P[i+2]||c;d+=`C${b[0]+(c[0]-a[0])/6} ${b[1]+(c[1]-a[1])/6} ${c[0]-(e[0]-b[0])/6} ${c[1]-(e[1]-b[1])/6} ${c}`}
const K=[[491.8,395],[505,462],[518.6,442.7],[531.4,457.3],[544.6,369],[557.5,456.7],[570.7,491.7],[583.6,518.3],[597,526.7],[609.6,527.8],[622.9,528.3],[636,531.5],[649.3,530],[661.8,527.3],[675.7,523.7],[689.3,521],[702,520],[714.6,515.3],[728.2,501.7],[741.4,479.3],[754.6,432.7],[767.9,373.3],[781.4,353.3],[794.3,277.3],[807.5,232.7],[820,429],[833.2,519],[846,532],[859.3,534.3],[873,534.8],[886,535],[899,535]];
const tb=(x,y,t,l,sz,b,a)=>`<text x="${x}" y="${y}" font-family="Liberation Sans,Arial,sans-serif" font-size="${sz}" ${b?'font-weight="bold"':''} text-anchor="${a||'start'}" ${l?`textLength="${l}" lengthAdjust="spacingAndGlyphs"`:''} fill="${b?'#111':'#222'}">${t}</text>`;
let g='<path d="M470.500 179h446v388h-446z" fill="#fdff80"/>';
g+=`<path d="${d}V535H486.500z" fill="#bfbfbf"/><path d="M470.500 179v388M916.500 179v388" stroke="#111" stroke-width="1.200"/>`;
g+='<path d="M450.500 178.500h484v389.500h-484z" fill="none" stroke="#000" stroke-width="2.600"/>';
for(let i=0;i<7;i++){const x=484.5+i*69.08;g+=`<path d="M${x} 568v7" stroke="#000" stroke-width="2.500"/>`+tb(x,593,200+i*100,27.5,16.5,1,'middle')}
for(let i=0;i<6;i++){const y=535-i*65;g+=`<path d="M442 ${y}h8" stroke="#000" stroke-width="2.500"/>`+tb(414,y+4.5,(i*.2).toFixed(1),23,16.5,1)}
g+=`<path d="${d}" fill="none" stroke="#e21408" stroke-width="2.700"/>`;
K.forEach(([x,y])=>g+=`<rect x="${x-2}" y="${y-2}" width="4" height="4" fill="#244"/><rect x="${x-1}" y="${y-1}" width="3" height="3" fill="#7cc9bc"/>`);
g+=tb(497.5,162.5,'How to find under the curve area on Origin',411,20,1);
g+='<path d="M638 142h109v16.500H638zM630 160.500h126v17.500H630z" fill="#fff"/>'+tb(638,156.5,'Area=117.24519',109,16)+tb(631,174.5,'FWHM=478.92884',124,16);
g+='<path d="M639 159.500h27M678 159.500h28M714 159.500h26" stroke="#333" stroke-dasharray="4 2"/><path d="M630 158.500h120v4H630z" fill="none"/>';
g+='<path d="M666 158h12v4h-12zM706 158h8v4h-8zM740 158h6v4h-6z" fill="#fff"/>';
g+='<rect x="894" y="180" width="19" height="19" rx="2" fill="#f1f1ef" stroke="#999"/><path d="M899 184.500l10 10M909 184.500l-10 10" stroke="#111" stroke-width="2"/><rect x="918" y="180" width="19" height="19" rx="2" fill="#dcdcdc" stroke="#999"/><path d="M923 185l8 5-8 5z" fill="#000"/>';
g+='<path d="M698 431.500v14.500l3.300-3 2.500 5 2.200-1-2.200-5h4z" fill="#fff" stroke="#333"/>';
document.getElementById('chart').innerHTML=g;

let hx='';[[60,42.5],[73,42.5],[53.5,54.3],[66.5,54.3],[79.5,54.3],[60,66],[73,66]].forEach(([x,y])=>{hx+='<path d="M'+[0,1,2,3,4,5].map(k=>(x+7*Math.sin(k*Math.PI/3)).toFixed(1)+' '+(y-7*Math.cos(k*Math.PI/3)).toFixed(1)).join('L')+'z"/>'});
document.getElementById('hex').innerHTML=hx;

/* letter-spacing so each label takes its column's width */
document.querySelectorAll('[data-fit],[data-fitv]').forEach(e=>{
  const v=e.dataset.fitv,t=+(v||e.dataset.fit),r=document.createRange();r.selectNodeContents(e);
  const b=r.getBoundingClientRect(),w=v?b.height:b.width;
  e.style.letterSpacing=((t-w)/e.textContent.length)+'px';
});
</script>
<script src="https://cdn.jsdelivr.net/npm/bootstrap@5.3.0/dist/js/bootstrap.bundle.min.js"></script>
</body>
</html>
